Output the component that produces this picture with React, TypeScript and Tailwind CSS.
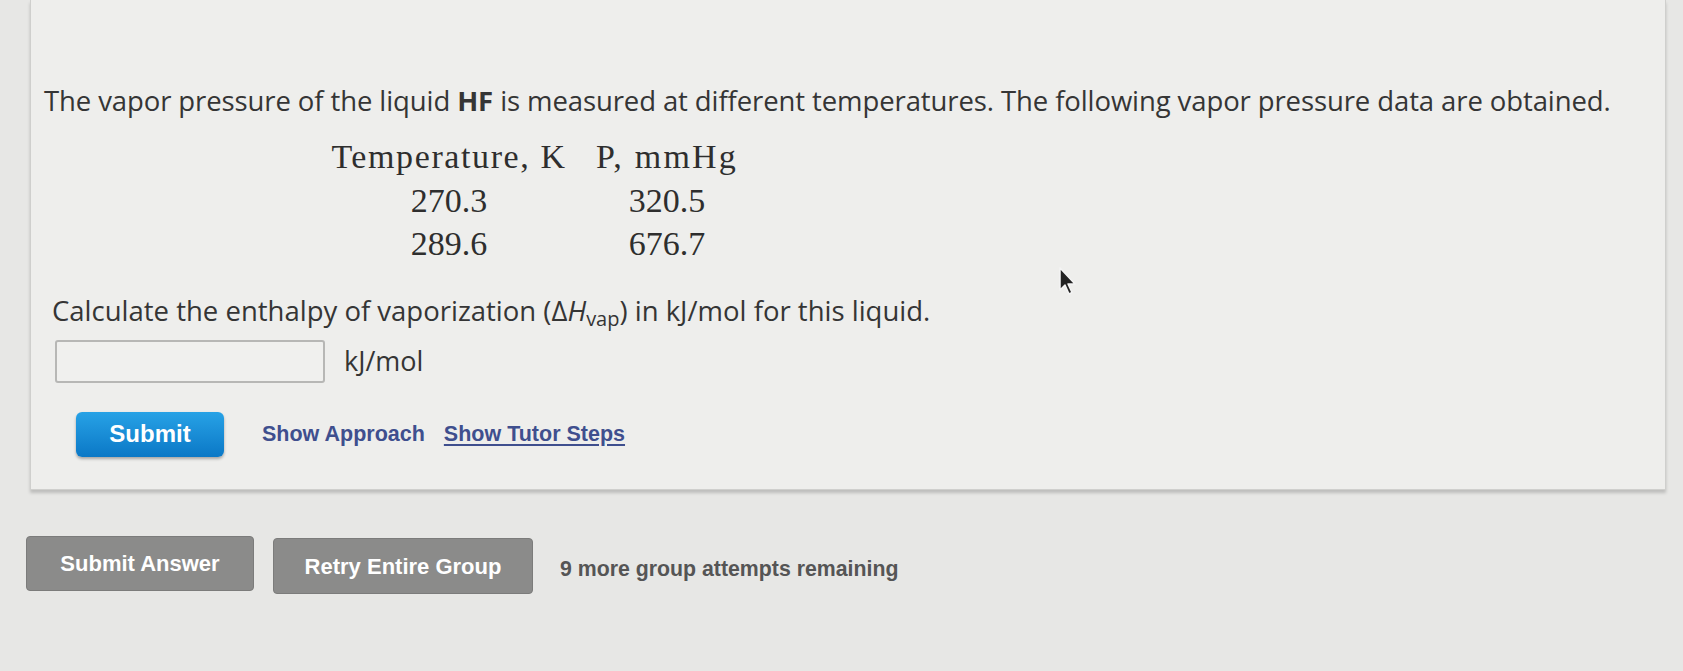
import React from "react";

const sans = { fontFamily: '"Open Sans", "Noto Sans", sans-serif' };
const arial = { fontFamily: '"Liberation Sans", Arial, sans-serif' };
const serif = { fontFamily: '"Liberation Serif", "Times New Roman", serif' };

function Cursor() {
  return (
    <svg className="absolute left-[1058px] top-[266px]" width="18" height="30" viewBox="0 0 18 30">
      <path d="M2 2 L2 24 L7 19 L11 28 L14 26.5 L10 18 L17 18 Z" fill="#222" stroke="#f4f4f4" strokeWidth="1.5" strokeLinejoin="round" />
    </svg>
  );
}

export default function App() {
  return (
    <div className="relative w-[1683px] h-[671px] overflow-hidden bg-[#e7e7e5] text-[#353535]">
      <div className="ml-[30px] w-[1636px] h-[490px] bg-[#eeeeec] border-x border-b border-[#cfcfcd] shadow-[0_3px_3px_rgba(0,0,0,0.18)] pl-[13px]">
        <p className="pt-[84px] text-[27.5px] leading-[34px] tracking-[-0.1px]" style={sans}>
          The vapor pressure of the liquid <b className="font-bold">HF</b> is measured at different temperatures. The following vapor pressure data are obtained.
        </p>

        <div className="mt-[17px] ml-[275px] grid grid-cols-[260px_164px] gap-x-[6px] text-[34px] leading-[43.5px] text-[#2e2e2e] whitespace-nowrap" style={serif}>
          <div className="text-center tracking-[1.6px]">Temperature, K</div>
          <div className="text-center tracking-[2.2px]">P, mmHg</div>
          <div className="text-center">270.3</div>
          <div className="text-center">320.5</div>
          <div className="text-center">289.6</div>
          <div className="text-center">676.7</div>
        </div>

        <p className="mt-[28px] ml-[8px] text-[27.5px] leading-[34px]" style={sans}>
          Calculate the enthalpy of vaporization (Δ<i>H</i>
          <sub className="text-[20px] relative top-[5px] align-baseline">vap</sub>) in kJ/mol for this liquid.
        </p>

        <div className="mt-[12px] ml-[11px] flex items-center gap-[19px]">
          <div className="w-[270px] h-[43px] border-2 border-[#b7b7b5] rounded-[3px] bg-[#f0f0ee]" />
          <span className="text-[27px] leading-[34px]" style={sans}>kJ/mol</span>
        </div>

        <div className="mt-[29px] ml-[32px] flex items-center">
          <button
            className="w-[148px] h-[45px] rounded-[6px] bg-gradient-to-b from-[#27a2e6] to-[#0a78c6] text-white text-[24px] font-bold shadow-[0_2px_3px_rgba(0,0,0,0.3)]"
            style={arial}
          >
            Submit
          </button>
          <span className="ml-[38px] text-[21.5px] font-bold text-[#3f4f8e]" style={arial}>Show Approach</span>
          <span className="ml-[19px] text-[21.5px] font-bold text-[#3f4f8e] underline underline-offset-[3px]" style={arial}>Show Tutor Steps</span>
        </div>
      </div>

      <div className="mt-[43px] ml-[26px] flex items-center" style={arial}>
        <button className="w-[228px] h-[55px] rounded-[4px] bg-[#8b8b8a] border border-[#7c7c7b] text-white text-[22px] font-bold">
          Submit Answer
        </button>
        <button className="ml-[19px] w-[260px] h-[56px] mt-[5px] rounded-[4px] bg-[#8b8b8a] border border-[#7c7c7b] text-white text-[22px] font-bold">
          Retry Entire Group
        </button>
        <span className="ml-[27px] mt-[12px] text-[21.3px] font-bold text-[#555]">9 more group attempts remaining</span>
      </div>

      <Cursor />
    </div>
  );
}
